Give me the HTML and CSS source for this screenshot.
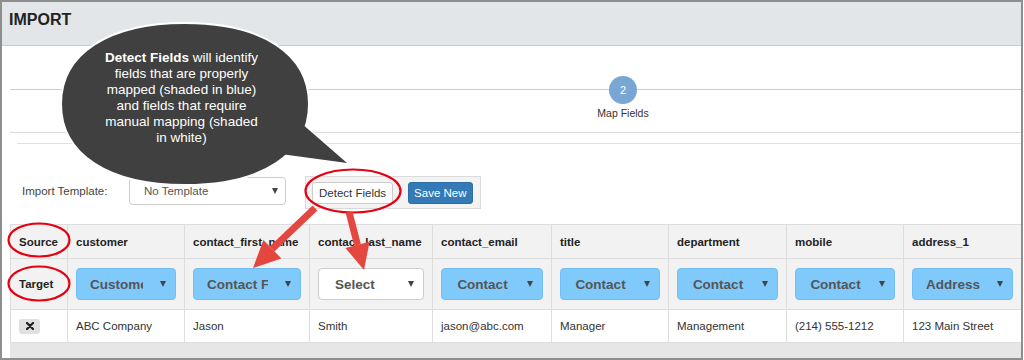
FILE: index.html
```html
<!DOCTYPE html>
<html lang="en">
<head>
<meta charset="utf-8">
<title>Import - Map Fields</title>
<link rel="stylesheet" href="styles.css">
</head>
<body>
<div class="frame">
  <header class="topbar"><h1>IMPORT</h1></header>

  <section class="steps">
    <div class="step">
      <span class="dot">2</span>
      <span class="step-label">Map Fields</span>
    </div>
  </section>

  <div class="panel">
    <div class="template-row">
      <label class="tpl-label">Import Template:</label>
      <div class="tpl-select"><span class="tpl-text">No Template</span><i class="caret"></i></div>
      <div class="btn-group">
        <button class="btn btn-default">Detect Fields</button>
        <button class="btn btn-primary">Save New</button>
      </div>
    </div>
  </div>

  <div class="table-wrap">
    <table class="map">
      <colgroup>
        <col class="c0"><col class="c1"><col class="c2"><col class="c3"><col class="c4"><col class="c5"><col class="c6"><col class="c7"><col class="c8">
      </colgroup>
      <thead>
        <tr>
          <th>Source</th>
          <th>customer</th>
          <th>contact_first_name</th>
          <th>contact_last_name</th>
          <th>contact_email</th>
          <th>title</th>
          <th>department</th>
          <th>mobile</th>
          <th>address_1</th>
        </tr>
      </thead>
      <tbody>
        <tr class="target">
          <td class="rowhead">Target</td>
          <td><div class="tsel"><span class="txt">Customer</span><i class="caret"></i></div></td>
          <td><div class="tsel"><span class="txt">Contact First</span><i class="caret"></i></div></td>
          <td><div class="tsel blank"><span class="txt">Select</span><i class="caret"></i></div></td>
          <td><div class="tsel"><span class="txt">Contact</span><i class="caret"></i></div></td>
          <td><div class="tsel"><span class="txt">Contact</span><i class="caret"></i></div></td>
          <td><div class="tsel"><span class="txt">Contact</span><i class="caret"></i></div></td>
          <td><div class="tsel"><span class="txt">Contact</span><i class="caret"></i></div></td>
          <td><div class="tsel"><span class="txt">Address</span><i class="caret"></i></div></td>
        </tr>
        <tr class="data">
          <td><span class="del"><svg width="8" height="8" viewBox="0 0 8 8"><path d="M1 1 L7 7 M7 1 L1 7" stroke="#1e1e1e" stroke-width="2.2" stroke-linecap="round"/></svg></span></td>
          <td>ABC Company</td>
          <td>Jason</td>
          <td>Smith</td>
          <td>jason@abc.com</td>
          <td>Manager</td>
          <td>Management</td>
          <td>(214) 555-1212</td>
          <td>123 Main Street</td>
        </tr>
      </tbody>
    </table>
  </div>

  <svg class="annot" width="1024" height="360" viewBox="0 0 1024 360">
    <polygon points="293,116 347,163 266,152" fill="#404040" stroke="#ffffff" stroke-width="2" stroke-linejoin="round"/>
    <path d="M61,104 C61,53.8 108.1,23 185,23 C261.9,23 309,53.8 309,104 C309,154.2 261.9,185 185,185 C108.1,185 61,154.2 61,104 Z" fill="#404040" stroke="#ffffff" stroke-width="2"/>
    <polygon points="293,116 347,163 266,152" fill="#404040"/>

    <ellipse cx="39" cy="240" rx="30.5" ry="16.5" fill="none" stroke="#e60012" stroke-width="2.2"/>
    <ellipse cx="39" cy="283.5" rx="30.5" ry="17" fill="none" stroke="#e60012" stroke-width="2.2"/>
    <ellipse cx="353" cy="191" rx="47.5" ry="21.5" fill="none" stroke="#e60012" stroke-width="2.2"/>

    <line x1="315" y1="208" x2="272" y2="249" stroke="#e4473f" stroke-width="7"/>
    <polygon points="253,268 281.4,258.5 263.4,239.9" fill="#e4473f"/>
    <line x1="349" y1="212" x2="357.5" y2="245" stroke="#e4473f" stroke-width="7"/>
    <polygon points="364,270 369.6,241.7 345.4,247.9" fill="#e4473f"/>
  </svg>

  <p class="bubble-text"><b>Detect Fields</b> will identify<br>fields that are properly<br>mapped (shaded in blue)<br>and fields that require<br>manual mapping (shaded<br>in white)</p>
</div>
</body>
</html>
```

FILE: styles.css
```css
body {
  margin: 0;
  background: #ffffff;
  font-family: "Liberation Sans", Arial, sans-serif;
}

.frame {
  position: relative;
  width: 1023px;
  height: 360px;
  box-sizing: border-box;
  border: 2px solid #8e8e8e;
  overflow: hidden;
  background: #ffffff;
}

/* header */
.topbar {
  box-sizing: border-box;
  height: 44px;
  padding: 9px 7px 0;
  background: #e2e6e8;
  border-bottom: 1px solid #c9cdd0;
}
.topbar h1 {
  margin: 0;
  font-size: 16px;
  line-height: 18px;
  font-weight: bold;
  color: #222222;
}

/* stepper */
.steps {
  margin-left: 8px;
  height: 87px;
  box-sizing: border-box;
  border-bottom: 1px solid #dcdcdc;
  background: linear-gradient(#cccccc, #cccccc) no-repeat 0 43px / 100% 1px;
}
.step {
  width: 80px;
  margin-left: 573px;
  padding-top: 30px;
  display: flex;
  flex-direction: column;
  align-items: center;
}
.dot {
  width: 28px;
  height: 28px;
  border-radius: 50%;
  background: #79a7d3;
  color: #ffffff;
  font-size: 11px;
  line-height: 28px;
  text-align: center;
}
.step-label {
  margin-top: 2px;
  font-size: 10.5px;
  line-height: 14px;
  color: #333333;
}

/* template row */
.panel {
  margin: 10px 0 0 15px;
  border-top: 1px solid #e0e0e0;
  padding: 32px 0 0 5px;
}
.template-row {
  display: flex;
  align-items: flex-start;
  height: 33px;
}
.tpl-label {
  width: 107px;
  margin-top: 1px;
  line-height: 28px;
  font-size: 11.5px;
  color: #444444;
}
.tpl-select {
  box-sizing: border-box;
  width: 157px;
  height: 28px;
  margin-top: 1px;
  display: flex;
  align-items: center;
  padding: 0 7px 0 14px;
  border: 1px solid #cccccc;
  border-radius: 4px;
  background: #ffffff;
  font-size: 11.5px;
  color: #555555;
}
.tpl-text {
  flex: 1;
}
.caret {
  flex: none;
  width: 0;
  height: 0;
  border-left: 3.5px solid transparent;
  border-right: 3.5px solid transparent;
  border-top: 6px solid #444444;
}
.btn-group {
  box-sizing: border-box;
  width: 176px;
  height: 33px;
  margin-left: 19px;
  padding: 5px 0 0 6px;
  display: flex;
  align-items: flex-start;
  gap: 15px;
  background: #f3f3f3;
  border: 1px solid #dadada;
}
.btn {
  height: 22px;
  margin: 0;
  padding: 0 6px;
  border: 1px solid #cccccc;
  border-radius: 3px;
  background: #ffffff;
  color: #333333;
  font-family: "Liberation Sans", Arial, sans-serif;
  font-size: 11.5px;
  line-height: 20px;
}
.btn-primary {
  padding: 0 5px;
  background: #337ab7;
  border-color: #2e6da4;
  color: #ffffff;
}

/* mapping table */
.table-wrap {
  margin: 15px 0 0 8px;
  height: 140px;
  background: #e6e6e6;
}
.map {
  width: 100%;
  border-collapse: collapse;
  table-layout: fixed;
}
.c0 { width: 57px; }
.c1 { width: 117px; }
.c2 { width: 125px; }
.c3 { width: 123px; }
.c4 { width: 119px; }
.c5 { width: 117px; }
.c6 { width: 118px; }
.c7 { width: 117px; }
.c8 { width: 118px; }

.map th,
.map td {
  border: 1px solid #dddddd;
  padding: 0 8px;
  text-align: left;
  font-size: 11.5px;
  white-space: nowrap;
  overflow: hidden;
}
.map th {
  height: 33px;
  background: #f2f2f2;
  font-weight: bold;
  color: #222222;
}
.target td {
  height: 50px;
  background: #f2f2f2;
}
.target .rowhead {
  font-weight: bold;
  color: #222222;
}
.data td {
  height: 32px;
  background: #ffffff;
  color: #333333;
}

.tsel {
  box-sizing: border-box;
  width: 100%;
  height: 32px;
  display: flex;
  align-items: center;
  padding: 0 9px 0 13px;
  border: 1px solid #72bef4;
  border-radius: 4px;
  background: #80c9fb;
  font-size: 13.5px;
  font-weight: bold;
  color: #555555;
}
.tsel .txt {
  flex: 1;
  min-width: 0;
  overflow: hidden;
  white-space: nowrap;
  text-align: center;
}
.tsel .caret {
  margin-left: 17px;
}
.tsel.blank {
  background: #ffffff;
  border-color: #cccccc;
}
.tsel.blank .txt {
  text-align: left;
  padding-left: 3px;
}

.del {
  display: inline-flex;
  width: 21px;
  height: 15px;
  align-items: center;
  justify-content: center;
  border-radius: 3px;
  background: #e0e0e0;
  vertical-align: middle;
}

/* annotation overlay */
.annot {
  position: absolute;
  left: -2px;
  top: -2px;
  pointer-events: none;
}
.bubble-text {
  position: absolute;
  left: 77px;
  top: 48px;
  width: 205px;
  margin: 0;
  text-align: center;
  color: #ffffff;
  font-size: 13.5px;
  line-height: 16px;
}
```
